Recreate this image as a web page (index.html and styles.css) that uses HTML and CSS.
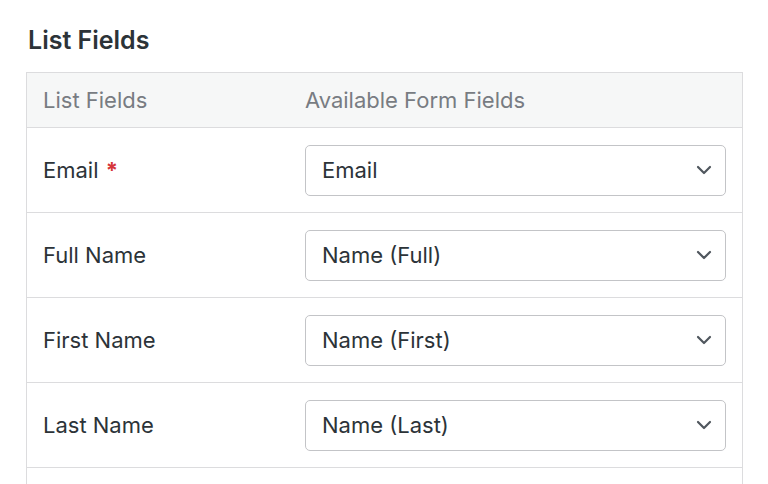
FILE: index.html
```html
<!DOCTYPE html>
<html>
<head>
<meta charset="utf-8">
<link rel="stylesheet" href="styles.css">
</head>
<body>
<div class="page">
  <h2 class="title">List Fields</h2>
  <div class="table">
    <div class="row head">
      <div class="cell label">List Fields</div>
      <div class="cell field">Available Form Fields</div>
    </div>
    <div class="row">
      <div class="cell label">Email <span class="req">*</span></div>
      <div class="cell field"><div class="select"><span>Email</span><svg class="chev" viewBox="0 0 16 10" width="16" height="10"><path d="M2 2l6 6 6-6" fill="none" stroke="#50575e" stroke-width="2.2" stroke-linecap="round" stroke-linejoin="round"/></svg></div></div>
    </div>
    <div class="row">
      <div class="cell label">Full Name</div>
      <div class="cell field"><div class="select"><span>Name (Full)</span><svg class="chev" viewBox="0 0 16 10" width="16" height="10"><path d="M2 2l6 6 6-6" fill="none" stroke="#50575e" stroke-width="2.2" stroke-linecap="round" stroke-linejoin="round"/></svg></div></div>
    </div>
    <div class="row">
      <div class="cell label">First Name</div>
      <div class="cell field"><div class="select"><span>Name (First)</span><svg class="chev" viewBox="0 0 16 10" width="16" height="10"><path d="M2 2l6 6 6-6" fill="none" stroke="#50575e" stroke-width="2.2" stroke-linecap="round" stroke-linejoin="round"/></svg></div></div>
    </div>
    <div class="row">
      <div class="cell label">Last Name</div>
      <div class="cell field"><div class="select"><span>Name (Last)</span><svg class="chev" viewBox="0 0 16 10" width="16" height="10"><path d="M2 2l6 6 6-6" fill="none" stroke="#50575e" stroke-width="2.2" stroke-linecap="round" stroke-linejoin="round"/></svg></div></div>
    </div>
    <div class="row">
      <div class="cell label"></div>
      <div class="cell field"><div class="select"><span></span></div></div>
    </div>
  </div>
</div>
</body>
</html>
```
FILE: styles.css
```css
html, body {
  margin: 0;
  padding: 0;
  background: #ffffff;
}
body {
  font-family: Inter, "Open Sans", "Liberation Sans", sans-serif;
  color: #2c3338;
  overflow: hidden;
}
.page {
  padding: 0 25px 0 26px;
}
.title {
  margin: 0;
  padding-top: 25px;
  height: 72px;
  box-sizing: border-box;
  font-size: 25px;
  line-height: 30px;
  font-weight: 600;
  color: #2c3338;
  padding-left: 2px;
}
.table {
  border: 1px solid #dcdcde;
  border-bottom: none;
  width: 717px;
  box-sizing: border-box;
}
.row {
  display: grid;
  grid-template-columns: 262px 1fr;
  height: 85px;
  border-top: 1px solid #dcdcde;
  box-sizing: border-box;
  align-items: center;
}
.row:first-child {
  border-top: none;
}
.row.head {
  height: 54px;
  background: #f6f7f7;
}
.cell {
  padding-left: 16px;
}
.row .label {
  font-size: 22px;
  color: #2c3338;
}
.row.head .label,
.row.head .field {
  font-size: 22px;
  color: #787c82;
}
.req {
  color: #d63638;
  font-weight: 700;
  margin-left: 1px;
}
.field {
  padding-right: 16px;
}
.select {
  height: 51px;
  border: 1px solid #c3c4c7;
  border-radius: 5px;
  box-sizing: border-box;
  display: flex;
  align-items: center;
  justify-content: space-between;
  padding: 0 13px 0 16px;
  font-size: 22px;
  color: #2c3338;
  background: #fff;
}
.chev {
  display: block;
}
```
